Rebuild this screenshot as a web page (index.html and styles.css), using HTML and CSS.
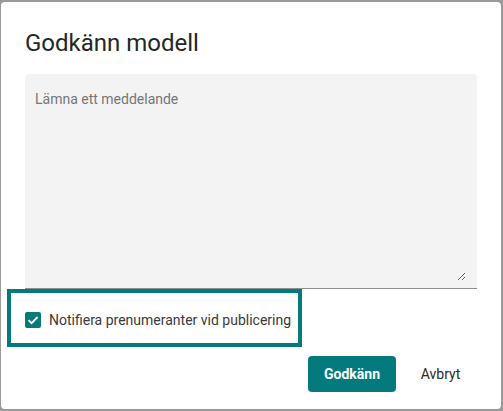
FILE: index.html
```html
<!DOCTYPE html>
<html lang="sv">
<head>
<meta charset="utf-8">
<link rel="stylesheet" href="styles.css">
</head>
<body>
<div class="dialog">
  <h1 class="title">Godkänn modell</h1>
  <div class="field">
    <textarea class="message" placeholder="Lämna ett meddelande"></textarea>
  </div>
  <div class="notify">
    <span class="check">
      <svg width="16" height="16" viewBox="0 0 16 16"><path d="M3.5 8.2 L6.6 11.2 L12.6 5" fill="none" stroke="#fff" stroke-width="1.8"/></svg>
    </span>
    <span class="notify-label">Notifiera prenumeranter vid publicering</span>
  </div>
  <div class="actions">
    <button class="btn btn-primary">Godkänn</button>
    <button class="btn btn-text">Avbryt</button>
  </div>
</div>
</body>
</html>
```
FILE: styles.css
```css
html, body {
  margin: 0;
  padding: 0;
}
body {
  background: #9a9a9a;
  font-family: Roboto, "Liberation Sans", sans-serif;
  width: 503px;
  height: 411px;
  overflow: hidden;
}
.dialog {
  box-sizing: border-box;
  margin: 2px 0 0 1px;
  width: 500px;
  height: 407px;
  background: #fff;
  border-radius: 4px;
  padding: 25px 24px 16px 24px;
  display: flex;
  flex-direction: column;
}
.title {
  margin: 0;
  font-size: 24px;
  line-height: 32px;
  font-weight: 400;
  color: #262626;
}
.field {
  box-sizing: border-box;
  margin-top: 15px;
  width: 452px;
  height: 215px;
  border-bottom: 1px solid #8f8f8f;
  border-radius: 4px 4px 0 0;
  background: #f3f3f3;
  padding: 0 11px 7px 0;
  display: flex;
}
.message {
  box-sizing: border-box;
  flex: 1;
  height: 100%;
  border: none;
  background: transparent;
  padding: 15px 10px;
  font-family: Roboto, "Liberation Sans", sans-serif;
  font-size: 14px;
  line-height: 20px;
  color: #333;
  outline: none;
  display: block;
  resize: both;
}
.message::placeholder {
  color: #767676;
}
.notify {
  box-sizing: border-box;
  margin-left: -18px;
  width: 295px;
  height: 58px;
  border: 4px solid #047a7d;
  padding: 4px 0 0 14px;
  display: flex;
  align-items: center;
  gap: 8px;
}
.check {
  width: 16px;
  height: 16px;
  border-radius: 2px;
  background: #047a7d;
  display: flex;
}
.notify-label {
  font-size: 14px;
  color: #3a3a3a;
}
.actions {
  margin-top: 9px;
  display: flex;
  justify-content: flex-end;
  gap: 8px;
}
.btn {
  height: 36px;
  border: none;
  border-radius: 4px;
  padding: 0 16px;
  font-family: Roboto, "Liberation Sans", sans-serif;
  font-size: 14px;
  cursor: pointer;
}
.btn-primary {
  width: 88px;
  background: #047a7d;
  color: #fff;
  font-weight: 700;
}
.btn-text {
  width: 73px;
  background: transparent;
  color: #2a2a2a;
  font-weight: 400;
}
```
